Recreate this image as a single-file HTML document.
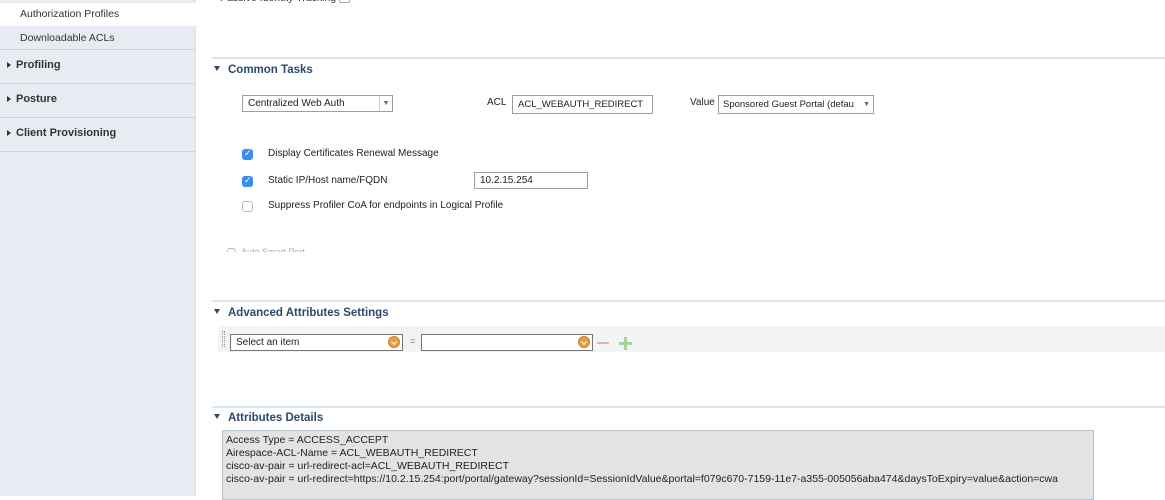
<!DOCTYPE html>
<html><head><style>
*{margin:0;padding:0;box-sizing:border-box}
body{width:1165px;height:496px;overflow:hidden;background:#fff;font-family:"Liberation Sans",Arial,sans-serif;font-size:11px;color:#222;position:relative}
.a{position:absolute;white-space:nowrap}
#sb{left:0;top:0;width:196px;height:496px;background:#e8ecf2;border-right:1px solid #dde2e8}
.row{position:absolute;left:0;width:196px;border-bottom:1px solid #cfd4da}
.sub{font-size:10.5px;color:#333;padding-left:20px}
.top{font-weight:bold;color:#333;font-size:11px;padding-left:16px}
.tri{position:absolute;left:7px;width:0;height:0;border-top:3px solid transparent;border-bottom:3px solid transparent;border-left:4px solid #333}
.hl{position:absolute;left:212px;right:0;height:2px;background:#d8e6ef}
.hd{position:absolute;left:214px;font-weight:bold;color:#2b4a6b;font-size:11.5px}
.hd:before{content:"";display:inline-block;width:0;height:0;border-left:3.5px solid transparent;border-right:3.5px solid transparent;border-top:5px solid #2b4a6b;margin-right:8px;vertical-align:2px}
.box{position:absolute;border:1px solid #9aa0a6;background:#fff;font-size:10px;padding-left:5px;line-height:16px;white-space:nowrap;overflow:hidden}
.cb{position:absolute;left:242px;width:11px;height:11px;border-radius:3px}
.on{background:#3b8cf0;}
.on:after{content:"✓";color:#fff;font-size:9px;position:absolute;left:2px;top:-1px}
.off{border:1px solid #bbb;background:#fff}
.lb{position:absolute;left:268px;font-size:10px;white-space:nowrap}
.og{position:absolute;width:12px;height:12px;border-radius:50%;background:#e8a040;border:1px solid #c8802a}
.og:after{content:"";position:absolute;left:2.5px;top:2.5px;width:3px;height:3px;border-right:1.5px solid #fff;border-bottom:1.5px solid #fff;transform:rotate(45deg)}
.tl{font-size:10.5px;line-height:13px}
</style></head><body>
<div id="sb" class="a">
 <div class="row sub" style="top:3px;height:23px;background:#fff;border:none;line-height:23px">Authorization Profiles</div>
 <div class="row sub" style="top:26px;height:24px;line-height:24px">Downloadable ACLs</div>
 <div class="row top" style="top:50px;height:34px;line-height:30px"><span class="tri" style="top:12px"></span>Profiling</div>
 <div class="row top" style="top:84px;height:34px;line-height:30px"><span class="tri" style="top:12px"></span>Posture</div>
 <div class="row top" style="top:118px;height:34px;line-height:30px"><span class="tri" style="top:12px"></span>Client Provisioning</div>
</div>
<div class="a" style="left:220px;top:-8px;font-size:10.5px;color:#333">Passive Identity Tracking <span style="display:inline-block;width:11px;height:11px;border:1px solid #aaa;border-radius:2px;vertical-align:-2px"></span></div>
<div class="hl" style="top:57px"></div>
<div class="hd" style="top:64px">Common Tasks</div>
<div class="box" style="left:242px;top:95px;width:151px;height:17px">Centralized Web Auth<span style="position:absolute;right:0;top:0;width:13px;height:15px;border-left:1px solid #ccc;font-size:7px;text-align:center;color:#666">▼</span></div>
<div class="a" style="left:487px;top:97px;font-size:10px">ACL</div>
<div class="box" style="left:512px;top:95px;width:141px;height:19px;line-height:17px;font-size:9.5px">ACL_WEBAUTH_REDIRECT</div>
<div class="a" style="left:690px;top:97px;font-size:10px">Value</div>
<div class="box" style="left:718px;top:95px;width:156px;height:19px;line-height:17px;padding-left:4px;font-size:9.5px">Sponsored Guest Portal (defau<span style="position:absolute;right:3px;top:0;font-size:7px;color:#666">▼</span></div>
<div class="cb on" style="top:149px"></div><div class="lb" style="top:148px">Display Certificates Renewal Message</div>
<div class="cb on" style="top:176px"></div><div class="lb" style="top:175px">Static IP/Host name/FQDN</div>
<div class="box" style="left:474px;top:172px;width:114px;height:17px">10.2.15.254</div>
<div class="cb off" style="top:201px"></div><div class="lb" style="top:200px">Suppress Profiler CoA for endpoints in Logical Profile</div>
<div class="a" style="left:227px;top:248px;width:9px;height:4px;border:1px solid #bbb;border-bottom:none;border-radius:3px 3px 0 0"></div>
<div class="a" style="left:241px;top:247px;font-size:9px;color:#aaa;height:5px;overflow:hidden;line-height:10px">Auto Smart Port</div>
<div class="hl" style="top:300px"></div>
<div class="hd" style="top:307px">Advanced Attributes Settings</div>
<div class="a" style="left:218px;top:326px;right:0;height:26px;background:#f3f4f6"></div>
<div class="a" style="left:222px;top:331px;width:3px;height:16px;border-left:1px dotted #999;border-right:1px dotted #999"></div>
<div class="box" style="left:230px;top:334px;width:173px;height:17px;border-color:#777">Select an item</div>
<div class="og" style="left:388px;top:336px"></div>
<div class="a" style="left:410px;top:336px;font-size:9px;color:#666">=</div>
<div class="box" style="left:421px;top:334px;width:172px;height:17px;border-color:#777"></div>
<div class="og" style="left:578px;top:336px"></div>
<div class="a" style="left:597px;top:342px;width:12px;height:2px;background:#e3b7a8"></div>
<div class="a" style="left:619px;top:342px;width:13px;height:3px;background:#a9d29a"></div>
<div class="a" style="left:624px;top:337px;width:3px;height:13px;background:#a9d29a"></div>
<div class="hl" style="top:406px"></div>
<div class="hd" style="top:412px">Attributes Details</div>
<div class="a tl" style="left:222px;top:430px;width:872px;height:70px;background:#e3e3e3;border:1px solid #b8c4cc;padding:3px 0 0 3px">Access Type = ACCESS_ACCEPT<br>Airespace-ACL-Name = ACL_WEBAUTH_REDIRECT<br>cisco-av-pair = url-redirect-acl=ACL_WEBAUTH_REDIRECT<br>cisco-av-pair = url-redirect=https://10.2.15.254:port/portal/gateway?sessionId=SessionIdValue&amp;portal=f079c670-7159-11e7-a355-005056aba474&amp;daysToExpiry=value&amp;action=cwa</div>
</body></html>
